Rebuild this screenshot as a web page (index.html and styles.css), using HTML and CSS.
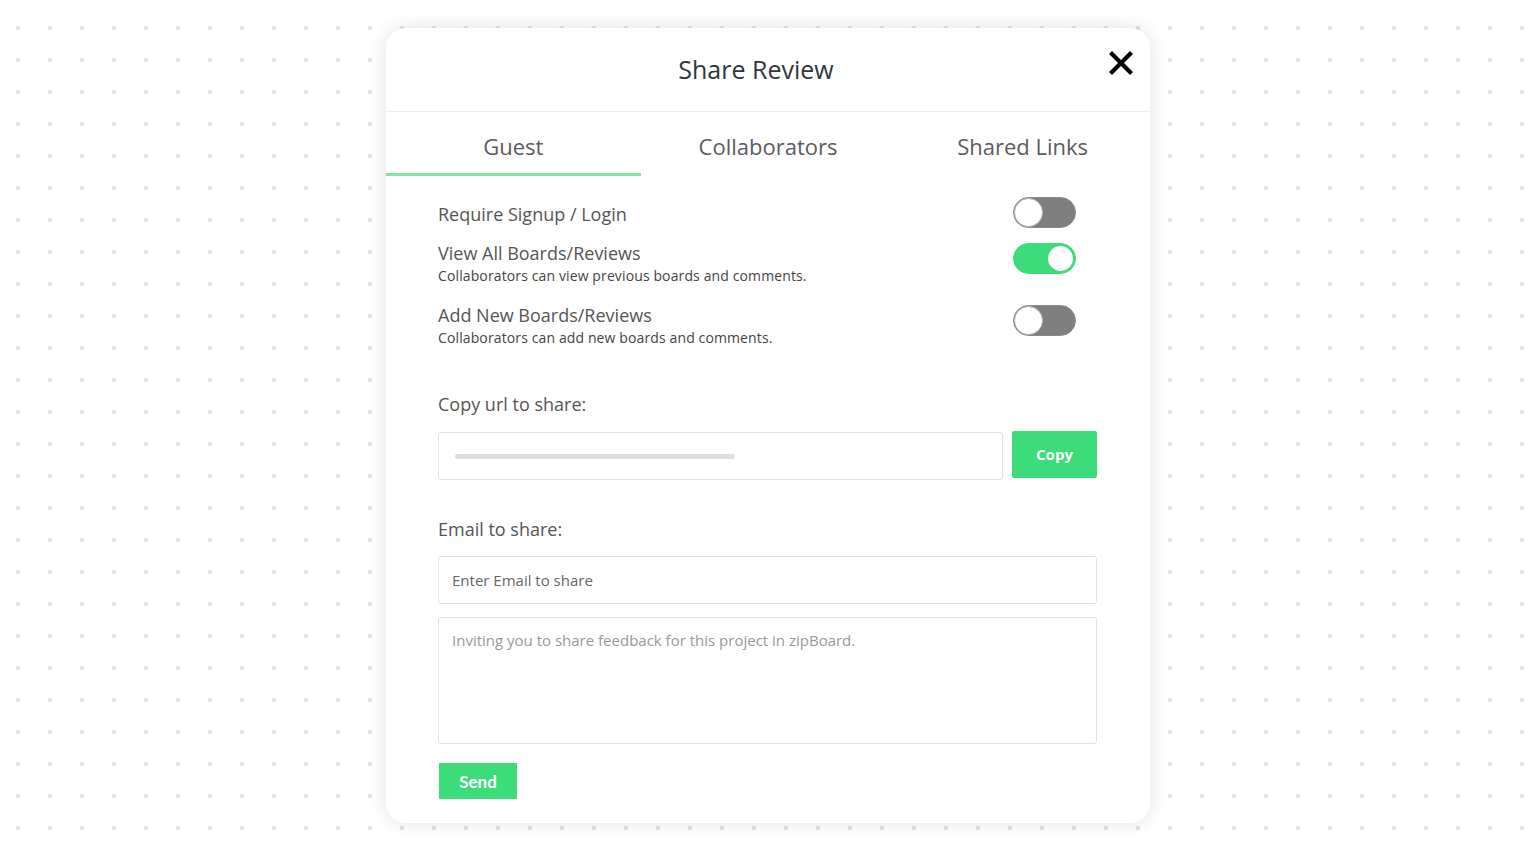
FILE: index.html
```html
<!DOCTYPE html>
<html lang="en">
<head>
    <meta charset="UTF-8">
    <meta name="viewport" content="width=device-width, initial-scale=1.0">
    <title>Share Review</title>
    <link rel="stylesheet" href="styles.css">
</head>
<body>
    <div class="modal">
        <div class="modal-header">
            <div class="modal-title">Share Review</div>
            <button class="close-btn" aria-label="Close">
                <svg width="24" height="24" viewBox="0 0 24 24">
                    <path d="M3 3 L21 21 M21 3 L3 21" stroke="#000" stroke-width="4.2" stroke-linecap="square" fill="none"/>
                </svg>
            </button>
        </div>

        <div class="tabs">
            <div class="tab active">Guest</div>
            <div class="tab">Collaborators</div>
            <div class="tab">Shared Links</div>
        </div>

        <div class="modal-body">
            <div class="option option-single">
                <div class="option-text">
                    <div class="option-title">Require Signup / Login</div>
                </div>
                <span class="toggle"></span>
            </div>
            <div class="option option-second">
                <div class="option-text">
                    <div class="option-title">View All Boards/Reviews</div>
                    <div class="option-desc">Collaborators can view previous boards and comments.</div>
                </div>
                <span class="toggle on"></span>
            </div>
            <div class="option">
                <div class="option-text">
                    <div class="option-title">Add New Boards/Reviews</div>
                    <div class="option-desc">Collaborators can add new boards and comments.</div>
                </div>
                <span class="toggle"></span>
            </div>

            <div class="field-label url-label">Copy url to share:</div>
            <div class="url-row">
                <div class="url-box"><span class="url-bar"></span></div>
                <button class="btn copy-btn">Copy</button>
            </div>

            <div class="field-label email-label">Email to share:</div>
            <input class="email-input" type="text" placeholder="Enter Email to share">
            <textarea class="message-input" placeholder="Inviting you to share feedback for this project in zipBoard."></textarea>
            <button class="btn send-btn">Send</button>
        </div>
    </div>
</body>
</html>
```

FILE: styles.css
```css
body {
    margin: 0;
    padding: 0;
    min-height: 100vh;
    background-color: #fff;
    background-image: radial-gradient(circle, #e3e3e3 2px, transparent 2.6px);
    background-size: 32px 32px;
    background-position: 2px 12px;
    font-family: 'Open Sans', 'Noto Sans', sans-serif;
    color: #555;
}

.modal {
    width: 764px;
    margin: 28px auto 0;
    background-color: #fff;
    border-radius: 20px;
    box-shadow: 0 0 18px rgba(0, 0, 0, 0.12);
    overflow: hidden;
}

.modal-header {
    position: relative;
    height: 83px;
    border-bottom: 1px solid #eee;
    display: flex;
    justify-content: center;
    align-items: center;
    padding-right: 24px;
}

.modal-title {
    font-size: 25px;
    font-weight: 500;
    color: #2f3640;
    margin-bottom: 2px;
}

.close-btn {
    position: absolute;
    top: 23px;
    right: 17px;
    padding: 0;
    border: none;
    background: none;
    cursor: pointer;
    line-height: 0;
}

.tabs {
    display: flex;
}

.tab {
    flex: 1;
    text-align: center;
    font-size: 22px;
    line-height: 30px;
    color: #5c5c5c;
    padding: 19px 0 12px;
    border-bottom: 3px solid transparent;
}

.tab.active {
    border-bottom-color: #7ee5a5;
}

.modal-body {
    padding: 21px 53px 24px 52px;
    display: flex;
    flex-direction: column;
}

.option {
    display: flex;
    justify-content: space-between;
    align-items: flex-start;
    margin-top: 16px;
    padding-right: 21px;
}

.option-single {
    margin-top: 0;
    align-items: center;
}

.option-single .option-title {
    padding-top: 2px;
}

.option-second {
    margin-top: 13px;
}

.option-title {
    font-size: 18px;
    line-height: 24px;
    color: #555;
}

.option-desc {
    font-size: 14px;
    line-height: 22px;
    letter-spacing: 0.12px;
    color: #444;
}

.option .toggle {
    margin-top: 2px;
}

.option-single .toggle {
    margin-top: 0;
}

.toggle {
    position: relative;
    width: 63px;
    height: 31px;
    border-radius: 16px;
    background-color: #7f7f7f;
    box-sizing: border-box;
    border: 1px solid #8a8a8a;
    flex-shrink: 0;
}

.toggle::after {
    content: '';
    position: absolute;
    top: 0;
    left: 0;
    width: 29px;
    height: 29px;
    box-sizing: border-box;
    border-radius: 50%;
    background-color: #fff;
    border: 1px solid #b5b5b5;
}

.toggle.on {
    background-color: #3ddc7a;
    border-color: #3ddc7a;
}

.toggle.on::after {
    left: auto;
    right: 0;
    border: 2px solid #3ddc7a;
}

.field-label {
    font-size: 18px;
    line-height: 24px;
    color: #555;
}

.url-label {
    margin-top: 43px;
}

.url-row {
    display: flex;
    gap: 9px;
    margin-top: 16px;
}

.url-box {
    flex: 1;
    height: 48px;
    box-sizing: border-box;
    border: 1px solid #e1e1e1;
    border-radius: 3px;
    display: flex;
    align-items: center;
    padding-left: 16px;
}

.url-bar {
    display: block;
    width: 280px;
    height: 5px;
    border-radius: 3px;
    background-color: #dedede;
}

.btn {
    border: none;
    background-color: #3ddc7a;
    color: #fff;
    font-weight: bold;
    cursor: pointer;
    border-radius: 2px;
}

.copy-btn {
    width: 85px;
    height: 47px;
    margin-top: -1px;
    padding-bottom: 3px;
    font-family: 'Open Sans', sans-serif;
    font-size: 15px;
}

.email-label {
    margin-top: 37px;
}

.email-input,
.message-input {
    display: block;
    width: 100%;
    box-sizing: border-box;
    border: 1px solid #e1e1e1;
    border-radius: 3px;
    font-family: 'Open Sans', sans-serif;
    font-size: 15px;
    padding: 0 13px;
    outline: none;
}

.email-input {
    height: 48px;
    margin-top: 15px;
    color: #555;
}

.email-input::placeholder {
    color: #666;
}

.message-input {
    height: 127px;
    margin-top: 13px;
    padding-top: 12px;
    resize: none;
}

.message-input::placeholder {
    color: #999;
}

.send-btn {
    align-self: flex-start;
    width: 78px;
    height: 36px;
    margin-top: 19px;
    margin-left: 1px;
    font-family: 'Lato', sans-serif;
    font-size: 17px;
    border-radius: 0;
}
```
